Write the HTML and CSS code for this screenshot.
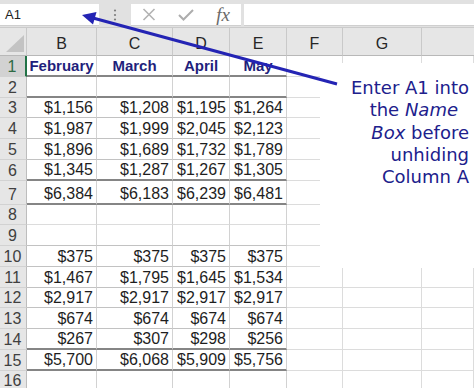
FILE: index.html
```html
<!DOCTYPE html>
<html>
<head>
<meta charset="utf-8">
<link rel="stylesheet" href="styles.css">
</head>
<body>
<div class="app">
  <div class="fbar">
    <div class="namebox">A1</div>
    <div class="grip">
      <svg width="4" height="14" viewBox="0 0 4 14"><circle cx="2" cy="2.5" r="1.1"/><circle cx="2" cy="7" r="1.1"/><circle cx="2" cy="11.5" r="1.1"/></svg>
    </div>
    <div class="fbtns">
      <svg class="ic" width="14" height="13" viewBox="0 0 14 13"><path d="M1.5 1 L12.5 12 M12.5 1 L1.5 12" fill="none" stroke="#b3b3b3" stroke-width="1.6"/></svg>
      <svg class="ic" width="16" height="12" viewBox="0 0 16 12"><path d="M1 6 L5.5 10.5 L15 1" fill="none" stroke="#adadad" stroke-width="2"/></svg>
      <span class="fx">fx</span>
    </div>
    <div class="finput"></div>
  </div>

  <div class="sheet">
    <div class="row hdr"><div class="corner"></div><div class="ch">B</div><div class="ch">C</div><div class="ch">D</div><div class="ch">E</div><div class="ch">F</div><div class="ch">G</div><div class="ch last"></div></div>
    <div class="row hb"><div class="rh sel">1</div><div class="d m">February</div><div class="d m">March</div><div class="d m">April</div><div class="d m">May</div><div></div><div></div><div></div></div>
    <div class="row hb"><div class="rh">2</div><div class="d"></div><div class="d"></div><div class="d"></div><div class="d"></div><div></div><div></div><div></div></div>
    <div class="row g"><div class="rh">3</div><div class="d">$1,156</div><div class="d">$1,208</div><div class="d">$1,195</div><div class="d">$1,264</div><div></div><div></div><div></div></div>
    <div class="row g"><div class="rh">4</div><div class="d">$1,987</div><div class="d">$1,999</div><div class="d">$2,045</div><div class="d">$2,123</div><div></div><div></div><div></div></div>
    <div class="row g"><div class="rh">5</div><div class="d">$1,896</div><div class="d">$1,689</div><div class="d">$1,732</div><div class="d">$1,789</div><div></div><div></div><div></div></div>
    <div class="row hb"><div class="rh">6</div><div class="d">$1,345</div><div class="d">$1,287</div><div class="d">$1,267</div><div class="d">$1,305</div><div></div><div></div><div></div></div>
    <div class="row hb tall"><div class="rh">7</div><div class="d">$6,384</div><div class="d">$6,183</div><div class="d">$6,239</div><div class="d">$6,481</div><div></div><div></div><div></div></div>
    <div class="row"><div class="rh">8</div><div class="d"></div><div class="d"></div><div class="d"></div><div class="d"></div><div></div><div></div><div></div></div>
    <div class="row g"><div class="rh">9</div><div class="d"></div><div class="d"></div><div class="d"></div><div class="d"></div><div></div><div></div><div></div></div>
    <div class="row g"><div class="rh">10</div><div class="d">$375</div><div class="d">$375</div><div class="d">$375</div><div class="d">$375</div><div></div><div></div><div></div></div>
    <div class="row g"><div class="rh">11</div><div class="d">$1,467</div><div class="d">$1,795</div><div class="d">$1,645</div><div class="d">$1,534</div><div></div><div></div><div></div></div>
    <div class="row g"><div class="rh">12</div><div class="d">$2,917</div><div class="d">$2,917</div><div class="d">$2,917</div><div class="d">$2,917</div><div></div><div></div><div></div></div>
    <div class="row g"><div class="rh">13</div><div class="d">$674</div><div class="d">$674</div><div class="d">$674</div><div class="d">$674</div><div></div><div></div><div></div></div>
    <div class="row hb"><div class="rh">14</div><div class="d">$267</div><div class="d">$307</div><div class="d">$298</div><div class="d">$256</div><div></div><div></div><div></div></div>
    <div class="row hb"><div class="rh">15</div><div class="d">$5,700</div><div class="d">$6,068</div><div class="d">$5,909</div><div class="d">$5,756</div><div></div><div></div><div></div></div>
    <div class="row"><div class="rh">16</div><div class="d"></div><div class="d"></div><div class="d"></div><div class="d"></div><div></div><div></div><div></div></div>
  </div>

  <div class="callout">Enter A1 into<br>the <i class="nm">Name</i><br><i>Box</i> before<br>unhiding<br>Column A</div>

  <svg class="arrow" width="474" height="388" viewBox="0 0 474 388">
    <line x1="337" y1="84" x2="93" y2="18" stroke="#2424b4" stroke-width="3"/>
    <polygon points="82,15 93,24.5 96.5,12" fill="#2424b4"/>
  </svg>
</div>
</body>
</html>
```

FILE: styles.css
```css
body {
  margin: 0;
  font-family: "Liberation Sans", Arial, sans-serif;
}

.app {
  position: relative;
  width: 474px;
  height: 388px;
  overflow: hidden;
  background: #ffffff;
}

/* formula bar */
.fbar {
  display: flex;
  height: 28px;
  box-sizing: border-box;
  padding: 4px 0 1px;
  background: #e1e1e1;
  border-bottom: 1px solid #cbcbcb;
}

.namebox {
  width: 99px;
  box-sizing: border-box;
  background: #ffffff;
  border-bottom: 1px solid #cfcfcf;
  padding-left: 5px;
  display: flex;
  align-items: center;
  font-size: 13px;
  color: #222;
}

.grip {
  width: 32px;
  display: flex;
  justify-content: center;
  align-items: center;
  fill: #7d7d7d;
}

.fbtns {
  width: 110px;
  background: #ffffff;
  border-bottom: 1px solid #cfcfcf;
  box-sizing: border-box;
  display: flex;
  justify-content: space-around;
  align-items: center;
}

.fx {
  font-family: "Liberation Serif", "Times New Roman", serif;
  font-style: italic;
  font-size: 19px;
  color: #6a6a6a;
  line-height: 20px;
}

.finput {
  flex: 1;
  margin-left: 3px;
  background: #ffffff;
  border-bottom: 1px solid #cfcfcf;
}

/* sheet */
.row {
  display: grid;
  grid-template-columns: 27px 70px 76px 57px 57px 56px 79px 1fr;
  height: 20.75px;
}

.row > div {
  box-sizing: border-box;
  border-right: 1px solid #dcdcdc;
  border-bottom: 1px solid #dcdcdc;
  display: flex;
  align-items: flex-end;
  justify-content: flex-end;
  padding-right: 3px;
  font-size: 16px;
  line-height: 19px;
  color: #1e1e1e;
  white-space: nowrap;
  overflow: hidden;
}

.row.tall {
  height: 24px;
}

.row.g > .d {
  border-bottom-color: #c2c2c2;
}

.row.hb > .d {
  border-bottom: 2px solid #858585;
}

.row > .d {
  border-right-color: #d2d2d2;
}

.row > .m {
  justify-content: center;
  padding-right: 0;
  font-weight: bold;
  font-size: 15px;
  color: #1f1f7c;
}

/* headers */
.row.hdr {
  height: 28px;
  background: #e6e6e6;
}

.row.hdr > div {
  border-right: 1px solid #c9c9c9;
  border-bottom: 1px solid #b8b8b8;
  align-items: center;
  justify-content: center;
  padding: 3px 0 0;
  color: #262626;
  font-size: 16px;
}

.row.hdr > .last {
  border-right: none;
}

.corner {
  position: relative;
}

.corner::after {
  content: "";
  position: absolute;
  right: 2px;
  bottom: 3px;
  width: 18px;
  height: 17px;
  background: #c3c3c3;
  clip-path: polygon(100% 0, 100% 100%, 0 100%);
}

.row > .rh {
  background: #e6e6e6;
  border-right: 1px solid #bdbdbd;
  border-bottom: 1px solid #d2d2d2;
  justify-content: center;
  padding-right: 1px;
  color: #404040;
}

.row > .rh.sel {
  background: #d2d2d2;
  color: #2f6b45;
  border-right: 2px solid #217346;
}

/* callout */
.callout {
  position: absolute;
  left: 320px;
  top: 63px;
  width: 154px;
  height: 205px;
  box-sizing: border-box;
  background: #ffffff;
  padding: 14px 5px 0 0;
  text-align: right;
  font-family: "DejaVu Sans", Verdana, sans-serif;
  font-size: 18px;
  line-height: 22.3px;
  color: #20208c;
}

.nm {
  margin-right: 11px;
}

.arrow {
  position: absolute;
  left: 0;
  top: 0;
  pointer-events: none;
}
```
